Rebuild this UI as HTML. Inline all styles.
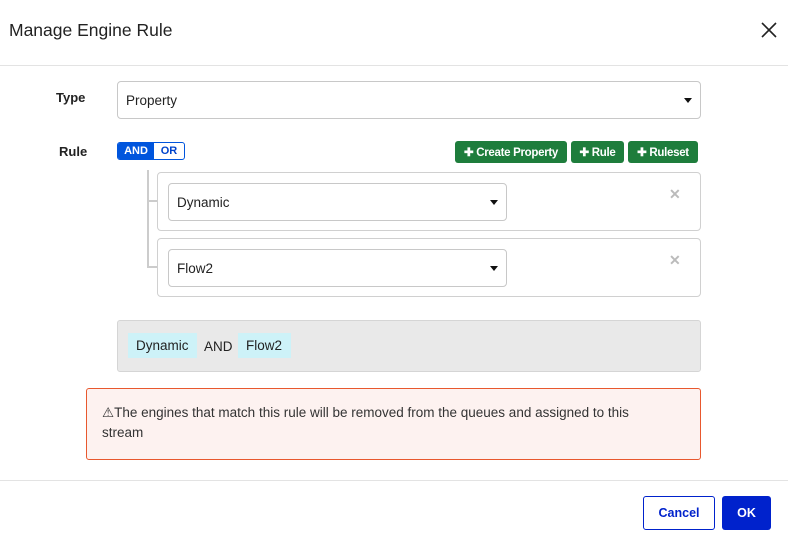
<!DOCTYPE html>
<html><head><style>
body{margin:0;width:788px;height:542px;background:#fff;font-family:"Liberation Sans",Arial,sans-serif;position:relative;overflow:hidden;color:#222}
.a{position:absolute}
.sel{position:absolute;border:1px solid #c8c8c8;border-radius:4px;background:#fff;font-size:13.5px;color:#222;box-sizing:border-box;padding-left:8px;display:flex;align-items:center}
.sel:after{content:"";position:absolute;right:8px;top:50%;margin-top:-2px;border-left:4px solid transparent;border-right:4px solid transparent;border-top:5px solid #111}
.btn{position:absolute;top:141px;height:22px;background:#1e7d3c;color:#fff;border-radius:3px;font-size:11.5px;font-weight:bold;display:flex;align-items:center;justify-content:center;letter-spacing:-0.3px}
.box{position:absolute;left:157px;width:544px;height:59px;border:1px solid #d0d0d0;border-radius:4px;box-sizing:border-box}
.x{position:absolute;color:#bbb;font-size:14px;font-weight:bold}
.chip{position:absolute;top:333px;height:25px;background:#cdf2f8;font-size:13.5px;display:flex;align-items:center;padding:0 8px;box-sizing:border-box}
</style></head><body>
<div class="a" style="left:9px;top:20px;font-size:17.5px;color:#222">Manage Engine Rule</div>
<svg class="a" style="left:761px;top:22px" width="16" height="16"><path d="M1 1L15 15M15 1L1 15" stroke="#222" stroke-width="1.6"/></svg>
<div class="a" style="left:0;top:65px;width:788px;height:1px;background:#e3e3e3"></div>
<div class="a" style="left:56px;top:90px;font-size:13px;font-weight:bold">Type</div>
<div class="sel" style="left:117px;top:81px;width:584px;height:38px">Property</div>
<div class="a" style="left:59px;top:144px;font-size:13px;font-weight:bold">Rule</div>
<div class="a" style="left:117px;top:142px;width:68px;height:18px;border:1px solid #0055dd;border-radius:3px;box-sizing:border-box;font-size:11px;font-weight:bold;display:flex;overflow:hidden">
<div style="width:36px;background:#0055dd;color:#fff;display:flex;align-items:center;justify-content:center">AND</div>
<div style="flex:1;color:#0044cc;display:flex;align-items:center;justify-content:center">OR</div></div>
<div class="btn" style="left:455px;width:112px">✚ Create Property</div>
<div class="btn" style="left:571px;width:53px">✚ Rule</div>
<div class="btn" style="left:628px;width:70px">✚ Ruleset</div>
<div class="a" style="left:147px;top:170px;width:2px;height:98px;background:#ccc"></div>
<div class="a" style="left:147px;top:200px;width:10px;height:2px;background:#ccc"></div>
<div class="a" style="left:147px;top:266px;width:10px;height:2px;background:#ccc"></div>
<div class="box" style="top:172px"></div>
<div class="sel" style="left:168px;top:183px;width:339px;height:38px">Dynamic</div>
<div class="x" style="left:669px;top:186px">✕</div>
<div class="box" style="top:238px"></div>
<div class="sel" style="left:168px;top:249px;width:339px;height:38px">Flow2</div>
<div class="x" style="left:669px;top:252px">✕</div>
<div class="a" style="left:117px;top:320px;width:584px;height:52px;background:#e9e9e9;border:1px solid #d5d5d5;border-radius:3px;box-sizing:border-box"></div>
<div class="chip" style="left:128px;width:69px">Dynamic</div>
<div class="a" style="left:204px;top:339px;font-size:13.5px">AND</div>
<div class="chip" style="left:238px;width:53px">Flow2</div>
<div class="a" style="left:86px;top:388px;width:615px;height:72px;background:#fdf2f0;border:1px solid #e8582e;border-radius:3px;box-sizing:border-box"></div>
<div class="a" style="left:102px;top:403px;width:560px;font-size:13.5px;line-height:20px;color:#333">⚠The engines that match this rule will be removed from the queues and assigned to this stream</div>
<div class="a" style="left:0;top:480px;width:788px;height:1px;background:#e3e3e3"></div>
<div class="a" style="left:643px;top:496px;width:72px;height:34px;border:1px solid #0022cc;border-radius:3px;box-sizing:border-box;color:#0022cc;font-size:12.5px;font-weight:bold;display:flex;align-items:center;justify-content:center">Cancel</div>
<div class="a" style="left:722px;top:496px;width:49px;height:34px;background:#0022cc;border-radius:3px;color:#fff;font-size:12.5px;font-weight:bold;display:flex;align-items:center;justify-content:center">OK</div>
</body></html>
